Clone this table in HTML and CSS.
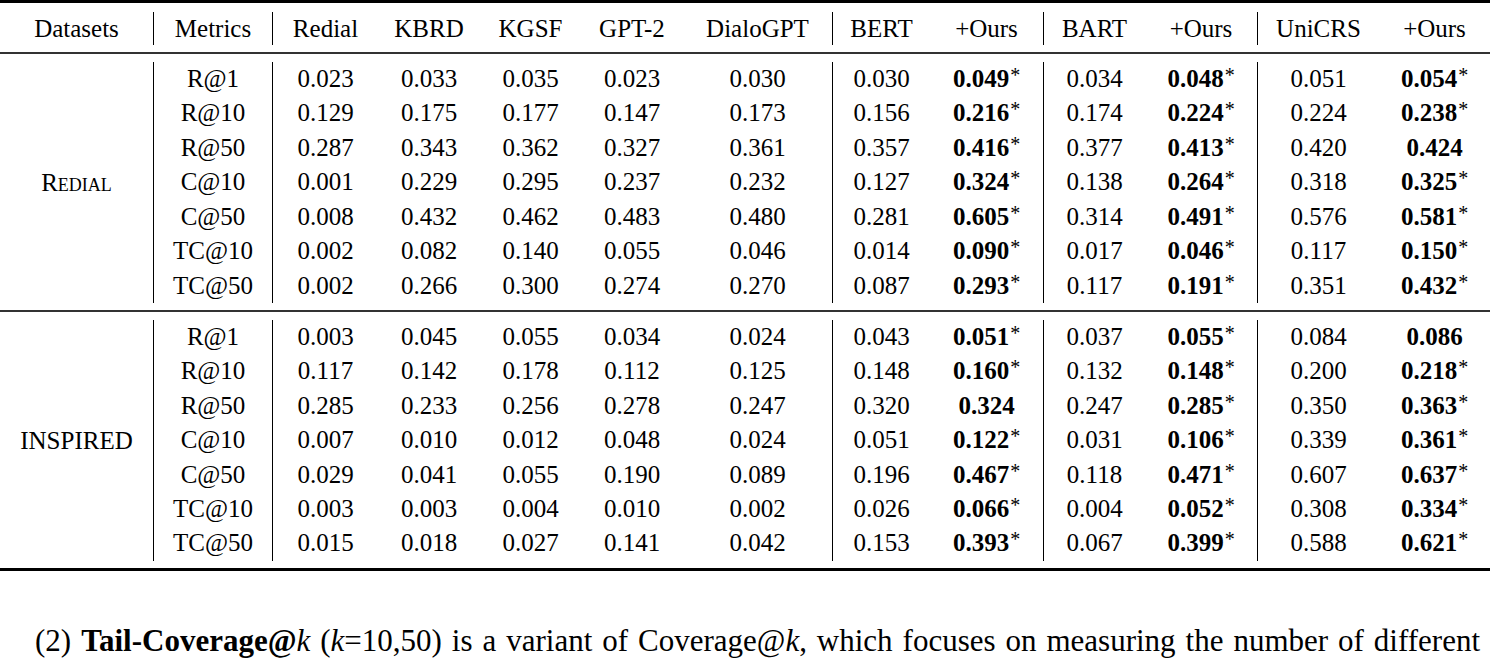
FILE: index.html
```html
<!DOCTYPE html>
<html>
<head>
<meta charset="utf-8">
<link rel="stylesheet" href="styles.css">
</head>
<body>
<div class="table">
  <div class="rule rule-heavy"></div>
  <div class="sec sec-head">
    <div class="grid grid-head">
      <div class="c">Datasets</div>
      <div class="c bl">Metrics</div>
      <div class="c bl">Redial</div>
      <div class="c">KBRD</div>
      <div class="c">KGSF</div>
      <div class="c">GPT-2</div>
      <div class="c">DialoGPT</div>
      <div class="c bl">BERT</div>
      <div class="c">+Ours</div>
      <div class="c bl">BART</div>
      <div class="c">+Ours</div>
      <div class="c bl">UniCRS</div>
      <div class="c">+Ours</div>
    </div>
  </div>
  <div class="rule rule-mid"></div>
  <div class="sec sec-body sec-first">
    <div class="grid grid-body">
      <div class="c ds"><span class="sc">Redial</span></div>
      <div class="c bl">R@1</div><div class="c bl">0.023</div><div class="c">0.033</div><div class="c">0.035</div><div class="c">0.023</div><div class="c">0.030</div><div class="c bl">0.030</div><div class="c"><b>0.049</b><sup>*</sup></div><div class="c bl">0.034</div><div class="c"><b>0.048</b><sup>*</sup></div><div class="c bl">0.051</div><div class="c"><b>0.054</b><sup>*</sup></div>
      <div class="c bl">R@10</div><div class="c bl">0.129</div><div class="c">0.175</div><div class="c">0.177</div><div class="c">0.147</div><div class="c">0.173</div><div class="c bl">0.156</div><div class="c"><b>0.216</b><sup>*</sup></div><div class="c bl">0.174</div><div class="c"><b>0.224</b><sup>*</sup></div><div class="c bl">0.224</div><div class="c"><b>0.238</b><sup>*</sup></div>
      <div class="c bl">R@50</div><div class="c bl">0.287</div><div class="c">0.343</div><div class="c">0.362</div><div class="c">0.327</div><div class="c">0.361</div><div class="c bl">0.357</div><div class="c"><b>0.416</b><sup>*</sup></div><div class="c bl">0.377</div><div class="c"><b>0.413</b><sup>*</sup></div><div class="c bl">0.420</div><div class="c"><b>0.424</b></div>
      <div class="c bl">C@10</div><div class="c bl">0.001</div><div class="c">0.229</div><div class="c">0.295</div><div class="c">0.237</div><div class="c">0.232</div><div class="c bl">0.127</div><div class="c"><b>0.324</b><sup>*</sup></div><div class="c bl">0.138</div><div class="c"><b>0.264</b><sup>*</sup></div><div class="c bl">0.318</div><div class="c"><b>0.325</b><sup>*</sup></div>
      <div class="c bl">C@50</div><div class="c bl">0.008</div><div class="c">0.432</div><div class="c">0.462</div><div class="c">0.483</div><div class="c">0.480</div><div class="c bl">0.281</div><div class="c"><b>0.605</b><sup>*</sup></div><div class="c bl">0.314</div><div class="c"><b>0.491</b><sup>*</sup></div><div class="c bl">0.576</div><div class="c"><b>0.581</b><sup>*</sup></div>
      <div class="c bl">TC@10</div><div class="c bl">0.002</div><div class="c">0.082</div><div class="c">0.140</div><div class="c">0.055</div><div class="c">0.046</div><div class="c bl">0.014</div><div class="c"><b>0.090</b><sup>*</sup></div><div class="c bl">0.017</div><div class="c"><b>0.046</b><sup>*</sup></div><div class="c bl">0.117</div><div class="c"><b>0.150</b><sup>*</sup></div>
      <div class="c bl">TC@50</div><div class="c bl">0.002</div><div class="c">0.266</div><div class="c">0.300</div><div class="c">0.274</div><div class="c">0.270</div><div class="c bl">0.087</div><div class="c"><b>0.293</b><sup>*</sup></div><div class="c bl">0.117</div><div class="c"><b>0.191</b><sup>*</sup></div><div class="c bl">0.351</div><div class="c"><b>0.432</b><sup>*</sup></div>
    </div>
  </div>
  <div class="rule rule-mid"></div>
  <div class="sec sec-body">
    <div class="grid grid-body">
      <div class="c ds">INSPIRED</div>
      <div class="c bl">R@1</div><div class="c bl">0.003</div><div class="c">0.045</div><div class="c">0.055</div><div class="c">0.034</div><div class="c">0.024</div><div class="c bl">0.043</div><div class="c"><b>0.051</b><sup>*</sup></div><div class="c bl">0.037</div><div class="c"><b>0.055</b><sup>*</sup></div><div class="c bl">0.084</div><div class="c"><b>0.086</b></div>
      <div class="c bl">R@10</div><div class="c bl">0.117</div><div class="c">0.142</div><div class="c">0.178</div><div class="c">0.112</div><div class="c">0.125</div><div class="c bl">0.148</div><div class="c"><b>0.160</b><sup>*</sup></div><div class="c bl">0.132</div><div class="c"><b>0.148</b><sup>*</sup></div><div class="c bl">0.200</div><div class="c"><b>0.218</b><sup>*</sup></div>
      <div class="c bl">R@50</div><div class="c bl">0.285</div><div class="c">0.233</div><div class="c">0.256</div><div class="c">0.278</div><div class="c">0.247</div><div class="c bl">0.320</div><div class="c"><b>0.324</b></div><div class="c bl">0.247</div><div class="c"><b>0.285</b><sup>*</sup></div><div class="c bl">0.350</div><div class="c"><b>0.363</b><sup>*</sup></div>
      <div class="c bl">C@10</div><div class="c bl">0.007</div><div class="c">0.010</div><div class="c">0.012</div><div class="c">0.048</div><div class="c">0.024</div><div class="c bl">0.051</div><div class="c"><b>0.122</b><sup>*</sup></div><div class="c bl">0.031</div><div class="c"><b>0.106</b><sup>*</sup></div><div class="c bl">0.339</div><div class="c"><b>0.361</b><sup>*</sup></div>
      <div class="c bl">C@50</div><div class="c bl">0.029</div><div class="c">0.041</div><div class="c">0.055</div><div class="c">0.190</div><div class="c">0.089</div><div class="c bl">0.196</div><div class="c"><b>0.467</b><sup>*</sup></div><div class="c bl">0.118</div><div class="c"><b>0.471</b><sup>*</sup></div><div class="c bl">0.607</div><div class="c"><b>0.637</b><sup>*</sup></div>
      <div class="c bl">TC@10</div><div class="c bl">0.003</div><div class="c">0.003</div><div class="c">0.004</div><div class="c">0.010</div><div class="c">0.002</div><div class="c bl">0.026</div><div class="c"><b>0.066</b><sup>*</sup></div><div class="c bl">0.004</div><div class="c"><b>0.052</b><sup>*</sup></div><div class="c bl">0.308</div><div class="c"><b>0.334</b><sup>*</sup></div>
      <div class="c bl">TC@50</div><div class="c bl">0.015</div><div class="c">0.018</div><div class="c">0.027</div><div class="c">0.141</div><div class="c">0.042</div><div class="c bl">0.153</div><div class="c"><b>0.393</b><sup>*</sup></div><div class="c bl">0.067</div><div class="c"><b>0.399</b><sup>*</sup></div><div class="c bl">0.588</div><div class="c"><b>0.621</b><sup>*</sup></div>
    </div>
  </div>
  <div class="rule rule-heavy"></div>
</div>
<p class="text">(2) <b>Tail-Coverage@</b><i>k</i> (<i>k</i>=10,50) is a variant of Coverage@<i>k</i>, which focuses on measuring the number of different</p>
</body>
</html>
```

FILE: styles.css
```css
html, body {
  margin: 0;
  padding: 0;
  background: #fff;
}
body {
  font-family: "Liberation Serif", "Times New Roman", serif;
  color: #000;
}
.table {
  width: 1490px;
  font-size: 25px;
}
.rule {
  background: #000;
}
.rule-heavy {
  height: 3px;
}
.rule-mid {
  height: 2px;
  background: #333;
}
.sec-head {
  padding: 9px 0 7px;
}
.sec-body {
  padding: 8px 0 7px;
}
.sec-first {
  padding-bottom: 7px;
}
.grid {
  display: grid;
  grid-template-columns: 153px 119px 106px 102px 101px 102px 149px 98px 113px 102px 112px 122px 111px;
}
.grid-head {
  grid-template-rows: 33px;
}
.grid-body {
  grid-template-rows: repeat(7, 34.43px);
}
.c {
  text-align: center;
  white-space: nowrap;
}
.grid-head .c {
  line-height: 33px;
}
.grid-body .c {
  line-height: 34.43px;
}
.bl {
  border-left: 1px solid #000;
}
.grid-body .ds {
  grid-row: span 7;
  display: flex;
  align-items: center;
  justify-content: center;
  line-height: 1;
}
.sc {
  font-variant: small-caps;
}
.c b {
  font-weight: bold;
}
.c sup {
  font-size: 20px;
  line-height: 0;
  vertical-align: 5px;
  font-weight: normal;
  margin-left: 1px;
}
.text {
  margin: 52px 0 0 35px;
  width: 1445px;
  font-size: 31px;
  line-height: 36px;
  text-align: justify;
  text-align-last: justify;
}
```
